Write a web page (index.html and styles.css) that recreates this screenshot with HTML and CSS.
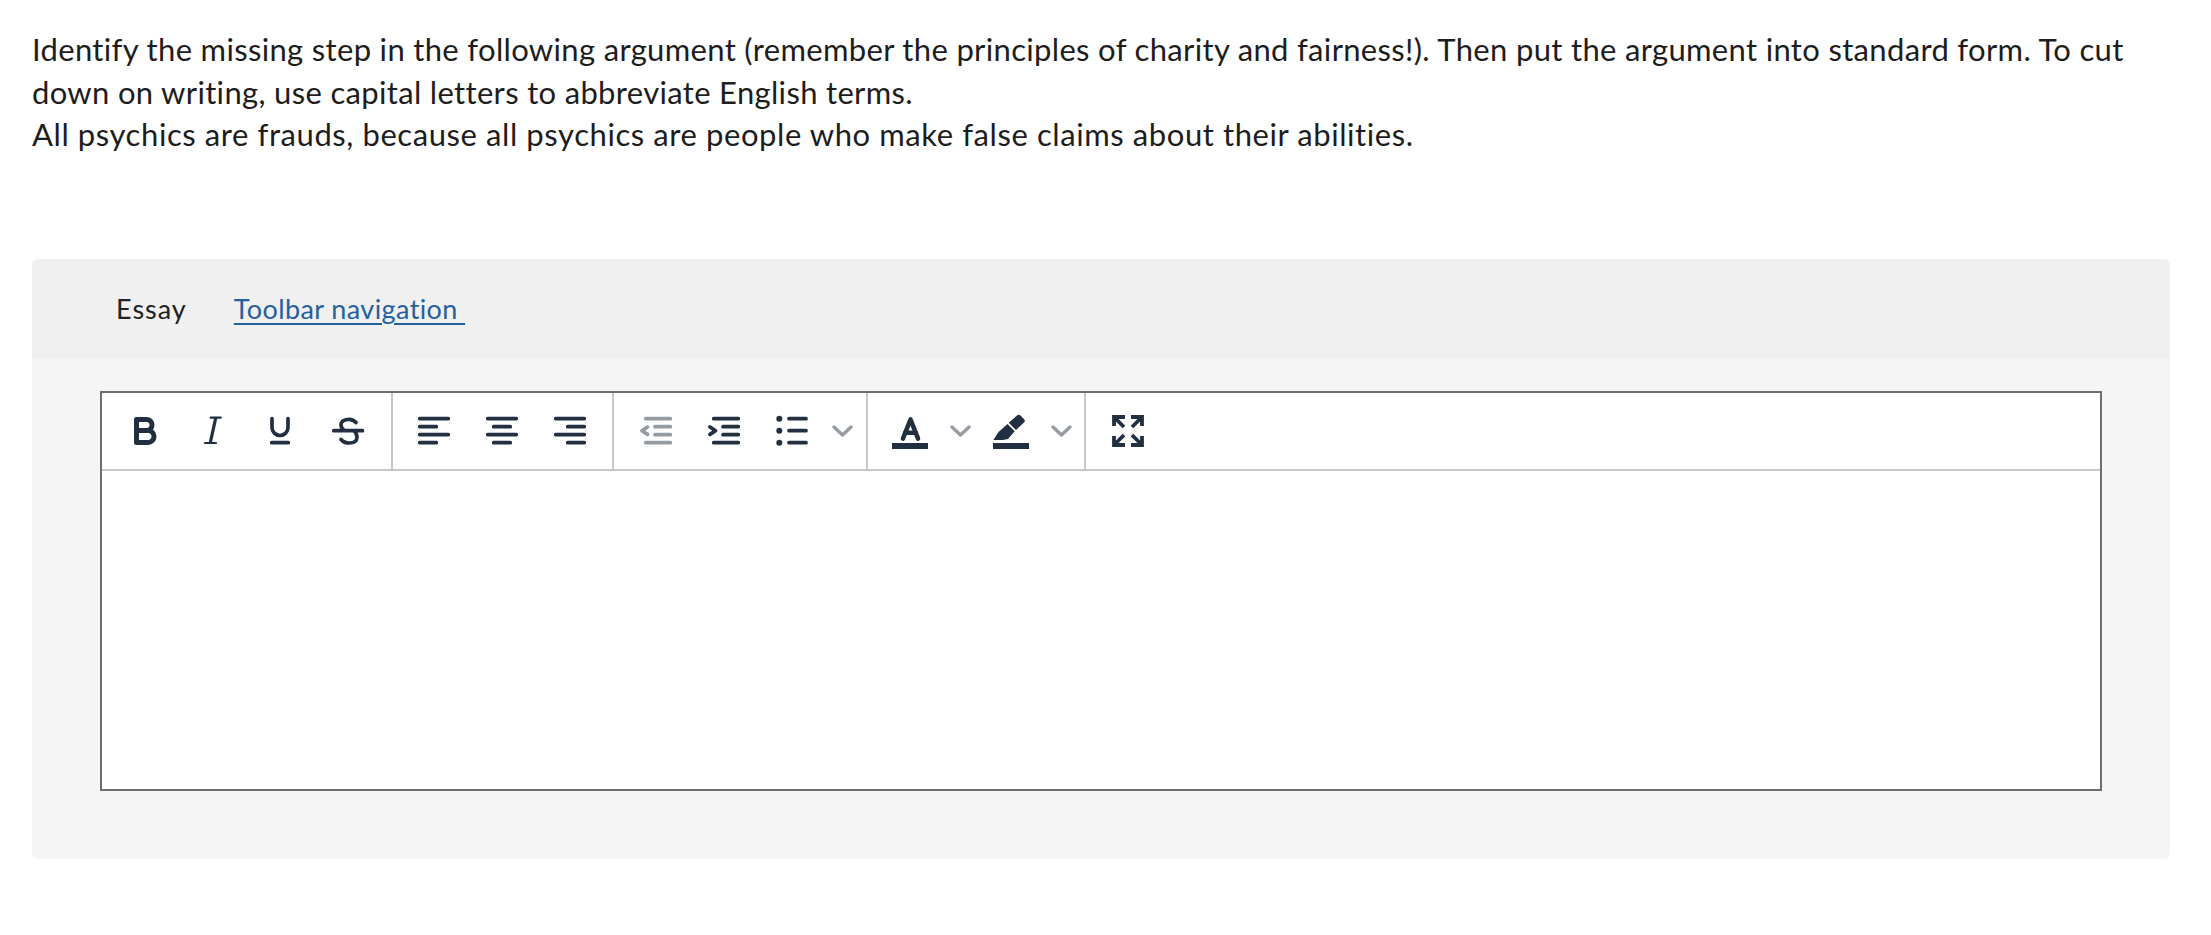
FILE: index.html
```html
<!DOCTYPE html>
<html lang="en">
<head>
<meta charset="utf-8">
<title>Essay</title>
<link rel="stylesheet" href="styles.css">
</head>
<body>
<main class="page">
  <div class="question">
    <div class="prompt">Identify the missing step in the following argument (remember the principles of charity and fairness!). Then put the argument into standard form. To cut down on writing, use capital letters to abbreviate English terms.</div>
    <div class="statement">All psychics are frauds, because all psychics are people who make false claims about their abilities.</div>
  </div>
  <section class="panel">
    <header class="panel-head">
      <span class="label">Essay</span>
      <a class="nav-link" href="#">Toolbar navigation&nbsp;</a>
    </header>
    <div class="panel-body">
      <div class="editor">
        <div class="toolbar">
          <div class="group g1">
            <svg class="icon" width="48" height="36" viewBox="0 0 48 36"><path class="heavy" d="M15.5 6.500h10a5.500 5.500 0 0 1 0 11h-10h11.500a6 6 0 0 1 0 12h-11.500z"/></svg>
            <svg class="icon" width="48" height="36" viewBox="0 0 48 36"><path class="thin" d="M21.700 4.700h10M16 30h11"/><path class="stem" d="M26.700 5L21.300 29.700"/></svg>
            <svg class="icon" width="48" height="36" viewBox="0 0 48 36"><path class="mid" d="M15 5.500v9a8 8 0 0 0 16 0v-9M14.700 29.700h16.600"/></svg>
            <svg class="icon" width="48" height="36" viewBox="0 0 48 36"><path class="mid" d="M31 9.500C29 7 27 6.300 24 6.300c-4.500 0-8 2-8 5.500 0 2 1 4 3 5.500M16 26.500c2 2.500 5 3.500 8.500 3.500 4.500 0 7.500-2 7.500-5.500 0-2.500-1-5-3-6.800M8.700 17.700h28.800"/></svg>
          </div>
          <div class="group g2">
            <svg class="icon" width="32" height="36" viewBox="0 0 32 36"><path class="mid" d="M1.700 5.700h28.600M1.700 13.700h16.600M1.700 21.700h28.600M1.700 29.700h16.600"/></svg>
            <svg class="icon" width="32" height="36" viewBox="0 0 32 36"><path class="mid" d="M1.700 5.700h28.600M7.700 13.700h16.600M1.700 21.700h28.600M7.700 29.700h16.600"/></svg>
            <svg class="icon" width="32" height="36" viewBox="0 0 32 36"><path class="mid" d="M1.700 5.700h28.600M13.700 13.700h16.600M1.700 21.700h28.600M13.700 29.700h16.600"/></svg>
          </div>
          <div class="group g3">
            <svg class="icon" width="32" height="36" viewBox="0 0 32 36"><path class="mid off" d="M5.700 5.700h24.600M15 13.700h15.300M15 21.700h15.300M5.700 29.700h24.600M7.500 14L2 17.700l5.500 3.700"/></svg>
            <svg class="icon" width="32" height="36" viewBox="0 0 32 36"><path class="mid" d="M5.700 5.700h24.600M15 13.700h15.300M15 21.700h15.300M5.700 29.700h24.600M2 14l5.500 3.700L2 21.400"/></svg>
            <svg class="icon list" width="32" height="36" viewBox="0 0 32 36"><path class="mid" d="M13 5.700h17M13 17.700h17M13 29.700h17"/><circle class="solid" cx="3.300" cy="5.700" r="3"/><circle class="solid" cx="3.300" cy="17.700" r="3"/><circle class="solid" cx="3.300" cy="29.700" r="3"/></svg>
            <svg class="chev" width="21" height="12" viewBox="0 0 21 12"><path d="M2 2l8.500 8L19 2"/></svg>
          </div>
          <div class="group g4">
            <svg class="icon" width="36" height="36" viewBox="0 0 36 36"><path class="strong" d="M11 25.500L18.500 6.500 26 25.500M13 19.700h11"/><rect class="solid" y="30" width="36" height="6"/></svg>
            <svg class="chev" width="21" height="12" viewBox="0 0 21 12"><path d="M2 2l8.500 8L19 2"/></svg>
            <svg class="icon" width="36" height="36" viewBox="0 0 36 36"><path class="solid" d="M24 2.500a2.500 2.500 0 0 1 3.500 0l3.500 3.500a2.500 2.500 0 0 1 0 3.500L23 17 15.700 9.700zM14.500 11l7.200 7.200L15 26l-5 1H.3l5.200-8z"/><rect class="solid" y="30" width="36" height="6"/></svg>
            <svg class="chev" width="21" height="12" viewBox="0 0 21 12"><path d="M2 2l8.500 8L19 2"/></svg>
          </div>
          <div class="group g5">
            <svg class="icon" width="32" height="36" viewBox="0 0 32 36"><path class="corner" d="M2 13V4h11M3 5l9 9M30 13V4H19M29 5l-9 9M2 23v9h11M3 31l9-9M30 23v9H19M29 31l-9-9"/></svg>
          </div>
        </div>
        <div class="content"></div>
      </div>
    </div>
  </section>
</main>
</body>
</html>
```
FILE: styles.css
```css
* { box-sizing: border-box; }
html, body { margin: 0; padding: 0; background: #fff; }
body { font-family: "Lato", "Liberation Sans", sans-serif; color: #1d1d1d; }
.page { width: 2211px; padding: 28px 41px 0 32px; }
.question { font-size: 31px; line-height: 42.7px; height: 231px; }
.prompt { letter-spacing: 0.33px; }
.statement { letter-spacing: 0.58px; }
.panel { background: #f5f5f5; border-radius: 6px; overflow: hidden; height: 600px; }
.panel-head { height: 100px; background: #f0f0f0; display: flex; align-items: center; padding: 0 0 2px 84px; gap: 47px; font-size: 27px; letter-spacing: 0.4px; }
.label { color: #222; letter-spacing: 1px; }
.nav-link { color: #25609f; text-decoration: underline; text-underline-offset: 4px; text-decoration-thickness: 2px; }
.panel-body { padding: 32px 68px 0; }
.editor { height: 400px; border: 2px solid #6e6e6e; background: #fff; display: flex; flex-direction: column; }
.toolbar { height: 78px; border-bottom: 2px solid #c8c8c8; display: flex; flex-shrink: 0; }
.group { height: 76px; display: flex; align-items: center; border-right: 2px solid #c8c8c8; flex: none; }
.g1 { width: 291px; padding-left: 19px; gap: 20px; }
.g2 { width: 221px; padding-left: 25px; gap: 36px; }
.g3 { width: 254px; padding-left: 26px; gap: 36px; }
.g3 .chev { margin-left: -12px; }
.g4 { width: 218px; padding-left: 24px; gap: 22px; }
.g5 { border-right: 0; padding-left: 26px; }
.icon, .chev { flex: none; display: block; }
.icon path { fill: none; stroke: #212f40; stroke-linecap: round; stroke-linejoin: round; }
.icon .thin { stroke-width: 2.2; }
.icon .stem { stroke-width: 3.2; stroke-linecap: butt; }
.icon .mid { stroke-width: 3.7; }
.icon .strong { stroke-width: 4.6; }
.icon .heavy { stroke-width: 5; }
.icon .off { stroke: #959ba3; }
.icon .corner { stroke-width: 3.8; stroke-linecap: butt; stroke-linejoin: miter; }
.icon .solid { fill: #212f40; stroke: none; }
.chev path { fill: none; stroke: #979ca3; stroke-width: 3.4; stroke-linecap: round; stroke-linejoin: round; }
.content { flex: 1; }
```
